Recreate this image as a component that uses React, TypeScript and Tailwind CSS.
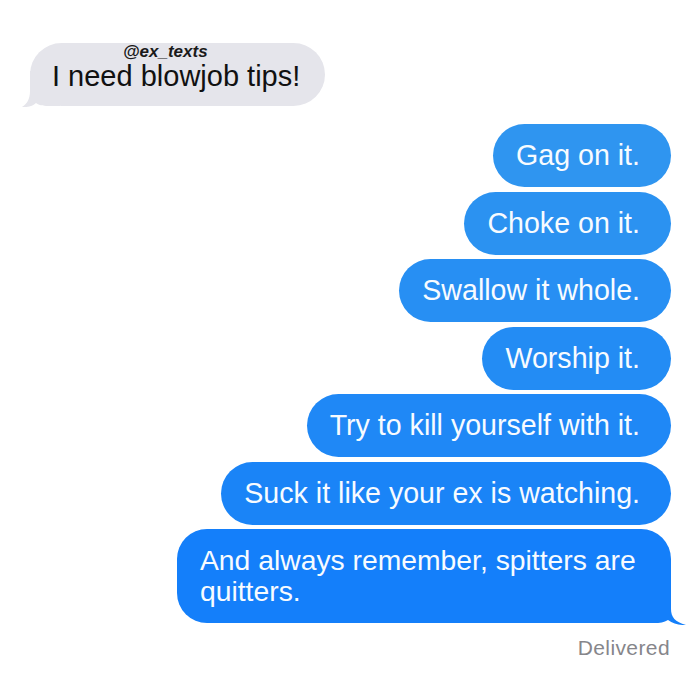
import React from "react";

const blue = [
  { t: "Gag on it.", c: "bg-[#2f95f0]" },
  { t: "Choke on it.", c: "bg-[#2b92f1]" },
  { t: "Swallow it whole.", c: "bg-[#278ff3]" },
  { t: "Worship it.", c: "bg-[#238cf4]" },
  { t: "Try to kill yourself with it.", c: "bg-[#1f88f6]" },
  { t: "Suck it like your ex is watching.", c: "bg-[#1a84f7]" },
];

export default function App() {
  return (
    <div
      className="w-[700px] h-[700px] bg-white flex flex-col overflow-hidden"
      style={{ fontFamily: '"Liberation Sans", Arial, sans-serif' }}
    >
      <div className="pt-[43px] pl-[30px] flex">
        <div className="relative bg-[#e5e5eb] rounded-[32px] pl-[22px] pr-[25px] pt-[18px] pb-[14px] text-[29px] leading-[31px] text-[#111]">
          <span className="absolute left-[93px] top-[-1px] text-[17px] leading-[20px] font-bold italic text-[#1a1a1a] z-10">
            @ex_texts
          </span>
          <span className="relative z-10">I need blowjob tips!</span>
          <svg
            className="absolute left-[-10px] bottom-[-1px]"
            width="40"
            height="36"
            viewBox="0 0 40 36"
          >
            <path
              d="M40 0 H10 V20 C10 28 7 33 2 36 C8 36.5 13 35 16 32 C20 35 25 35 30 35 H40 Z"
              fill="#e5e5eb"
            />
          </svg>
        </div>
      </div>

      <div className="mt-[18px] pr-[29px] flex flex-col items-end gap-[4.5px]">
        {blue.map((b) => (
          <div
            key={b.t}
            className={`${b.c} rounded-[32px] pl-[23px] pr-[31px] py-[16px] text-[28.6px] leading-[31px] text-[#f7fbff] whitespace-nowrap`}
          >
            {b.t}
          </div>
        ))}
        <div className="relative bg-[#147ffa] rounded-[30px] pl-[23px] pr-[20px] py-[16px] text-[28.3px] leading-[31px] text-[#f7fbff] w-[494px] whitespace-nowrap">
          <span className="relative z-10">
            And always remember, spitters are
            <br />
            quitters.
          </span>
          <svg
            className="absolute right-[-19px] bottom-[-2px]"
            width="50"
            height="40"
            viewBox="0 0 50 40"
          >
            <path
              d="M0 0 H31 V24 C31 32 35 37 46 40 C40 40.5 33 38.5 28 35 C24 37.5 20 38 14 38 H0 Z"
              fill="#147ffa"
            />
          </svg>
        </div>
        <div className="mt-[7px] pr-[1px] text-[21px] leading-[25px] text-[#86868b] tracking-[0.4px]">
          Delivered
        </div>
      </div>
    </div>
  );
}
